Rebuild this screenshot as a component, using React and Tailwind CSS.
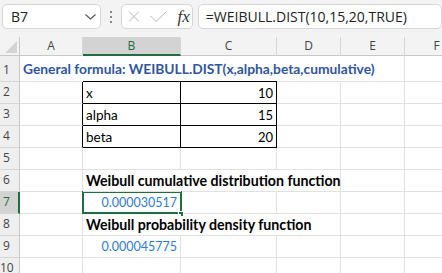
import React from "react";

const grid = "border-r border-b border-[#e1e1e1]";
const cellFont = { fontFamily: "Lato, 'Liberation Sans', sans-serif" };

function ColHead({ label, active }) {
  return (
    <div
      className={`flex items-center justify-center border-r border-[#d6d6d6] ${
        active
          ? "bg-[#d3d3d3] text-[#1e6e42] border-b-2 border-b-[#1e6e42]"
          : "border-b border-b-[#c8c8c8] text-[#444]"
      }`}
    >
      {label}
    </div>
  );
}

function RowHead({ n, active }) {
  return (
    <div
      className={`relative flex items-end pb-[2px] border-b ${
        active
          ? "bg-[#d3d3d3] text-[#1e6e42] border-r-2 border-r-[#1e6e42] border-b-[#d6d6d6]"
          : "bg-[#efefef] text-[#444] border-r border-r-[#c8c8c8] border-b-[#d6d6d6]"
      }`}
    >
      <span className="w-[13px] text-center whitespace-nowrap">{n}</span>
    </div>
  );
}

export default function App() {
  return (
    <div
      className="w-[442px] h-[273px] overflow-hidden bg-[#f3f3f3] text-[13px]"
      style={{ fontFamily: "'Open Sans', 'Noto Sans', sans-serif" }}
    >
      {/* FORMULA BAR */}
      <div className="h-[37px] flex items-start pt-[4px] pl-[2px]">
        <div className="w-[101px] h-[25px] bg-white border border-[#d6d6d6] rounded-[5px] flex items-center justify-between pl-[8px] pr-[4px] text-[14px] text-[#222]">
          <span>B7</span>
          <svg width="11" height="6" viewBox="0 0 11 6">
            <path d="M0.5 0.5 L5.5 5 L10.5 0.5" stroke="#555" strokeWidth="1.1" fill="none" />
          </svg>
        </div>
        <div className="w-[21px] h-[25px] flex flex-col items-center justify-center gap-[3px]">
          <span className="w-[2px] h-[2px] bg-[#888]" />
          <span className="w-[2px] h-[2px] bg-[#888]" />
          <span className="w-[2px] h-[2px] bg-[#888]" />
        </div>
        <div className="w-[73px] h-[25px] bg-white border border-[#d6d6d6] rounded-[5px] flex items-center pl-[5px]">
          <svg width="12" height="11" viewBox="0 0 12 11" className="ml-[1px]">
            <path d="M1 0.5 L11 10.5 M11 0.5 L1 10.5" stroke="#b5b5b5" strokeWidth="1" fill="none" />
          </svg>
          <svg width="17" height="11" viewBox="0 0 17 11" className="ml-[10px]">
            <path d="M0.5 5 L6 10.5 L16.5 0.5" stroke="#b5b5b5" strokeWidth="1" fill="none" />
          </svg>
          <span
            className="ml-[10px] text-[17px] italic text-[#333] leading-none"
            style={{ fontFamily: "'Liberation Serif', serif" }}
          >
            fx
          </span>
        </div>
        <div className="w-[250px] h-[25px] ml-[5px] bg-white border border-[#d6d6d6] rounded-[5px] flex items-center pl-[7px] text-[14px] text-[#222] whitespace-nowrap">
          =WEIBULL.DIST(10,15,20,TRUE)
        </div>
      </div>

      {/* SHEET */}
      <div className="grid grid-cols-[20px_63px_98px_96px_64px_64px_64px] grid-rows-[19px_26px_repeat(9,22px)] text-[12px]">
        {/* header row */}
        <div className="relative border-r border-b border-[#c8c8c8]">
          <svg width="12" height="12" viewBox="0 0 12 12" className="absolute left-[5px] top-[4px]">
            <path d="M12 0 L12 12 L0 12 Z" fill="#d4d4d4" />
          </svg>
        </div>
        <ColHead label="A" />
        <ColHead label="B" active />
        <ColHead label="C" />
        <ColHead label="D" />
        <ColHead label="E" />
        <ColHead label="F" />

        {/* row 1 */}
        <RowHead n="1" />
        <div className="relative z-10 bg-white border-b border-[#e1e1e1] flex items-end pb-[1px] pl-[3px] text-[13.8px] font-bold text-[#3056a0] whitespace-nowrap" style={cellFont}>
          General formula: WEIBULL.DIST(x,alpha,beta,cumulative)
        </div>
        <div className="bg-white border-b border-black" />
        <div className="bg-white border-b border-black" />
        <div className="bg-white border-b border-[#e1e1e1]" />
        <div className={`bg-white ${grid}`} />
        <div className={`bg-white ${grid}`} />

        {/* rows 2-4 */}
        {[
          ["2", "x", "10"],
          ["3", "alpha", "15"],
          ["4", "beta", "20"],
        ].map(([n, k, v]) => (
          <React.Fragment key={n}>
            <RowHead n={n} />
            <div className="bg-white border-r border-r-black border-b border-b-[#e1e1e1]" />
            <div className="bg-white border-r border-b border-black flex items-end pl-[3px] text-[13.5px] text-black" style={cellFont}>
              {k}
            </div>
            <div className="bg-white border-r border-b border-black flex items-end justify-end pr-[3px] text-[13px] text-black" style={cellFont}>
              {v}
            </div>
            <div className={`bg-white ${grid}`} />
            <div className={`bg-white ${grid}`} />
            <div className={`bg-white ${grid}`} />
          </React.Fragment>
        ))}

        {/* row 5 */}
        <RowHead n="5" />
        {[0, 1, 2, 3, 4, 5].map((i) => (
          <div key={i} className={`bg-white ${grid}`} />
        ))}

        {/* row 6 */}
        <RowHead n="6" />
        <div className={`bg-white ${grid}`} />
        <div className="relative z-10 bg-white border-b border-[#e1e1e1] flex items-end pl-[3px] text-[14.2px] font-bold text-black whitespace-nowrap" style={cellFont}>
          Weibull cumulative distribution function
        </div>
        <div className="bg-white border-b border-[#e1e1e1]" />
        <div className={`bg-white ${grid}`} />
        <div className={`bg-white ${grid}`} />
        <div className={`bg-white ${grid}`} />

        {/* row 7 */}
        <RowHead n="7" active />
        <div className={`bg-white ${grid}`} />
        <div className={`relative bg-white ${grid} flex items-end justify-end pr-[3px] text-[12.5px] text-[#2f7bd0]`} style={cellFont}>
          0.000030517
          <div className="absolute -top-[1px] -left-[1px] -right-[2px] -bottom-[1px] border-2 border-[#1e6e42]" />
          <div className="absolute -right-[4px] -bottom-[4px] w-[6px] h-[6px] bg-[#1e6e42] border border-white" />
        </div>
        <div className={`bg-white ${grid}`} />
        <div className={`bg-white ${grid}`} />
        <div className={`bg-white ${grid}`} />
        <div className={`bg-white ${grid}`} />

        {/* row 8 */}
        <RowHead n="8" />
        <div className={`bg-white ${grid}`} />
        <div className="relative z-10 bg-white border-b border-[#e1e1e1] flex items-end pl-[3px] text-[14.2px] font-bold text-black whitespace-nowrap" style={cellFont}>
          Weibull probability density function
        </div>
        <div className="bg-white border-b border-[#e1e1e1]" />
        <div className={`bg-white ${grid}`} />
        <div className={`bg-white ${grid}`} />
        <div className={`bg-white ${grid}`} />

        {/* row 9 */}
        <RowHead n="9" />
        <div className={`bg-white ${grid}`} />
        <div className={`bg-white ${grid} flex items-end justify-end pr-[3px] text-[12.5px] text-[#2f7bd0]`} style={cellFont}>
          0.000045775
        </div>
        <div className={`bg-white ${grid}`} />
        <div className={`bg-white ${grid}`} />
        <div className={`bg-white ${grid}`} />
        <div className={`bg-white ${grid}`} />

        {/* row 10 */}
        <RowHead n="10" />
        {[0, 1, 2, 3, 4, 5].map((i) => (
          <div key={i} className={`bg-white ${grid}`} />
        ))}
      </div>
    </div>
  );
}
